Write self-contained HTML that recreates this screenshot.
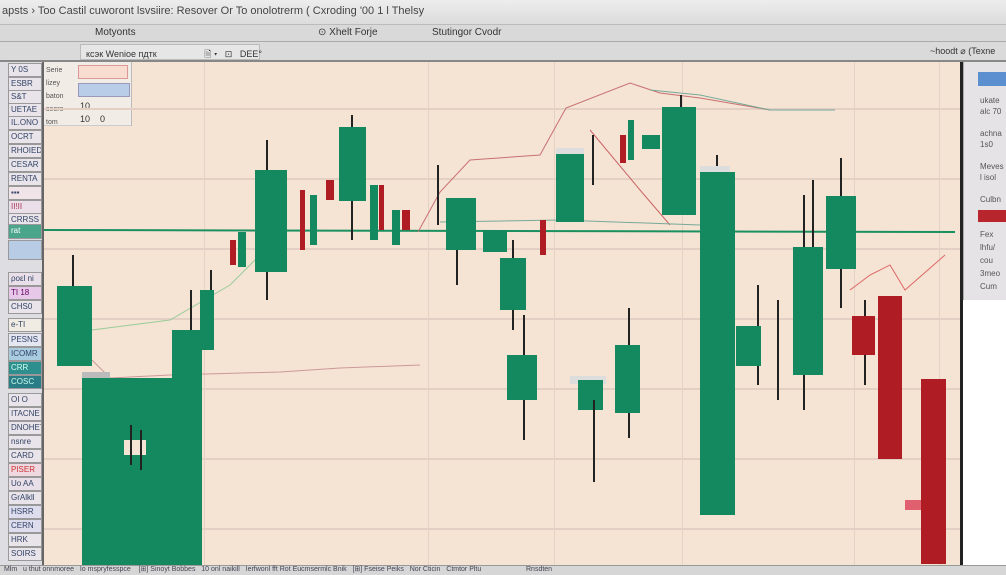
<!DOCTYPE html>
<html><head><meta charset="utf-8"><style>
body{margin:0;width:1006px;height:575px;overflow:hidden;background:#f5e3d4;font-family:"Liberation Sans",sans-serif;position:relative}
div{position:absolute;box-sizing:border-box}
.t{font-size:12px;color:#333;white-space:nowrap}
.g{background:#14895f}.r{background:#b01c24}.w{background:#222;width:2px}
.cell{left:8px;width:34px;height:14px;border:1px solid #999;background:#e8e4ea;font-size:8px;color:#346;overflow:hidden;line-height:12px;padding-left:2px;white-space:nowrap}
</style></head><body>
<div style="left:0;top:0;width:1006px;height:24px;background:linear-gradient(#ededed,#dcdcdc)"></div>
<div class="t" style="left:2px;top:5px;font-size:11px;color:#444">apsts › Too Castil cuworont lsvsiire: Resover Or To onolotrerm ( Cxroding '00 1 l Thelsy</div>
<div style="left:0;top:24px;width:1006px;height:18px;background:#d9d9d9;border-top:1px solid #bbb;border-bottom:1px solid #aaa"></div>
<div class="t" style="left:95px;top:27px;font-size:10px">Motyonts</div>
<div class="t" style="left:318px;top:27px;font-size:10px">⊙ Xhelt Forje</div>
<div class="t" style="left:432px;top:27px;font-size:10px">Stutingor Cvodr</div>
<div style="left:0;top:42px;width:1006px;height:20px;background:#dadada;border-bottom:2px solid #888"></div>
<div style="left:80px;top:44px;width:180px;height:16px;background:#e6e6e6;border:1px solid #bbb"></div>
<div class="t" style="left:86px;top:47px;font-size:9px">ксэк Wenioe пдтк &nbsp;&nbsp;&nbsp;&nbsp;&nbsp;&nbsp;&nbsp;&nbsp;&nbsp;&nbsp;&nbsp;&nbsp;&nbsp;&nbsp;&nbsp;&nbsp;&nbsp; 🗎 ▾ &nbsp; ⊡ &nbsp; DEE°</div>
<div class="t" style="left:930px;top:46px;font-size:9px">~hoodt ⌀ (Texne</div>
<!-- left panel -->
<div style="left:0;top:62px;width:44px;height:503px;background:#dedde2;border-right:2px solid #666"></div>
<div class="cell" style="top:63px">Y 0S</div><div class="cell" style="top:77px">ESBR</div><div class="cell" style="top:90px">S&T</div><div class="cell" style="top:103px">UETAE</div><div class="cell" style="top:116px">IL.ONO</div><div class="cell" style="top:130px">OCRT</div><div class="cell" style="top:144px">RHOIED</div><div class="cell" style="top:158px">CESAR</div><div class="cell" style="top:172px">RENTA</div>
<div class="cell" style="top:186px;background:#f0e4e8">▪▪▪</div><div class="cell" style="top:200px;background:#eadfe8;color:#a35">II!II</div><div class="cell" style="top:213px">CRRSS</div>
<div class="cell" style="top:224px;height:15px;background:#4aa58a;color:#fff">rat</div>
<div class="cell" style="top:240px;height:20px;background:#b8cce6"></div>
<div class="cell" style="top:272px;background:#e8dfe8">ρoεl ni</div><div class="cell" style="top:286px;background:#e8c8e8;color:#606">TI 18</div><div class="cell" style="top:300px">CHS0</div>
<div class="cell" style="top:318px;background:#f0ece4">e-TI</div><div class="cell" style="top:333px;background:#e4e6f2">PESNS</div><div class="cell" style="top:347px;background:#a8cbe0">ICOMR</div>
<div class="cell" style="top:361px;background:#2f8f8f;color:#cfe">CRR</div><div class="cell" style="top:375px;background:#2a7c86;color:#cfe">COSC</div>
<div class="cell" style="top:393px">OI O</div><div class="cell" style="top:407px">ITACNE</div><div class="cell" style="top:421px">DNOHET</div><div class="cell" style="top:435px">nsnre</div><div class="cell" style="top:449px">CARD</div><div class="cell" style="top:463px;background:#f0d8e0;color:#c33">PISER</div>
<div class="cell" style="top:477px;background:#e8dfe8">Uo AA</div><div class="cell" style="top:491px">GrAlkll</div><div class="cell" style="top:505px;background:#dde">HSRR</div><div class="cell" style="top:519px;background:#dde">CERN</div><div class="cell" style="top:533px">HRK</div><div class="cell" style="top:547px">SOIRS</div>
<!-- floating panel -->
<div style="left:44px;top:62px;width:88px;height:64px;background:#f2ece6;border-right:1px solid #bbb;border-bottom:1px solid #ccc"></div>
<div style="left:78px;top:65px;width:50px;height:14px;background:#f8dcd0;border:1px solid #d99"></div>
<div style="left:78px;top:83px;width:52px;height:14px;background:#b9cde8;border:1px solid #99b"></div>
<div class="t" style="left:46px;top:64px;font-size:7px;line-height:13px;color:#555">Serie<br>lizey<br>baton<br>seore<br>tom</div>
<div class="t" style="left:80px;top:100px;font-size:9px;line-height:13px">10<br>10 &nbsp;&nbsp; 0</div>
<!-- grid -->
<div style="left:44px;top:62px;width:918px;height:503px;background:
linear-gradient(90deg,transparent 0,transparent 160px,#e5d2c6 160px,#e5d2c6 161px,transparent 161px,transparent 384px,#e5d2c6 384px,#e5d2c6 385px,transparent 385px,transparent 510px,#e5d2c6 510px,#e5d2c6 511px,transparent 511px,transparent 638px,#e5d2c6 638px,#e5d2c6 639px,transparent 639px,transparent 810px,#e5d2c6 810px,#e5d2c6 811px,transparent 811px,transparent 895px,#e5d2c6 895px,#e5d2c6 896px,transparent 896px),
repeating-linear-gradient(transparent 0,transparent 46px,#e3cfc3 46px,#e3cfc3 48px,transparent 48px,transparent 70px)"></div>
<svg style="position:absolute;left:0;top:0" width="1006" height="575">
<polyline points="44,230 955,232" stroke="#1a9060" stroke-width="2" fill="none"/>
<polyline points="92,330 170,320 230,285 260,255" stroke="#9c9" stroke-width="1" fill="none"/>
<polyline points="92,360 110,378 170,375 280,372 340,368 420,365" stroke="#c99" stroke-width="1" fill="none"/>
<polyline points="418,232 440,192 470,160 540,155 566,108 630,83 660,93 700,98 770,110 830,110" stroke="#c87070" stroke-width="1" fill="none"/>
<polyline points="650,90 700,95 770,110 835,110" stroke="#7a9" stroke-width="1" fill="none"/>
<polyline points="590,130 640,190 670,225" stroke="#c66" stroke-width="1" fill="none"/>
<polyline points="850,290 870,275 890,265 905,290 945,255" stroke="#d66" stroke-width="1" fill="none"/>
<polyline points="440,222 560,220 700,225" stroke="#7a9" stroke-width="1" fill="none"/>
</svg>
<!-- candles -->
<div class="w" style="left:72px;top:255px;height:35px"></div>
<div class="g" style="left:57px;top:286px;width:35px;height:80px"></div>
<div style="left:82px;top:372px;width:28px;height:8px;background:#bbb"></div>
<div class="g" style="left:82px;top:378px;width:120px;height:187px"></div>
<div style="left:124px;top:440px;width:22px;height:15px;background:#f5e3d4"></div>
<div class="w" style="left:130px;top:425px;height:40px"></div><div class="w" style="left:140px;top:430px;height:40px"></div>
<div class="g" style="left:172px;top:330px;width:30px;height:70px"></div>
<div class="w" style="left:190px;top:290px;height:40px"></div><div class="w" style="left:210px;top:270px;height:80px"></div>
<div class="g" style="left:200px;top:290px;width:14px;height:60px"></div>
<div class="r" style="left:230px;top:240px;width:6px;height:25px"></div>
<div class="g" style="left:238px;top:232px;width:8px;height:35px"></div>
<div class="w" style="left:266px;top:140px;height:160px"></div>
<div class="g" style="left:255px;top:170px;width:32px;height:102px"></div>
<div class="r" style="left:300px;top:190px;width:5px;height:60px"></div>
<div class="g" style="left:310px;top:195px;width:7px;height:50px"></div>
<div class="r" style="left:326px;top:180px;width:8px;height:20px"></div>
<div class="w" style="left:351px;top:115px;height:125px"></div>
<div class="g" style="left:339px;top:127px;width:27px;height:74px"></div>
<div class="g" style="left:370px;top:185px;width:8px;height:55px"></div>
<div class="r" style="left:379px;top:185px;width:5px;height:45px"></div>
<div class="g" style="left:392px;top:210px;width:8px;height:35px"></div>
<div class="r" style="left:402px;top:210px;width:8px;height:20px"></div>
<div class="w" style="left:437px;top:165px;height:60px"></div>
<div class="w" style="left:456px;top:240px;height:45px"></div>
<div class="g" style="left:446px;top:198px;width:30px;height:52px"></div>
<div class="g" style="left:483px;top:230px;width:24px;height:22px"></div>
<div class="w" style="left:512px;top:240px;height:90px"></div>
<div class="g" style="left:500px;top:258px;width:26px;height:52px"></div>
<div class="r" style="left:540px;top:220px;width:6px;height:35px"></div>
<div class="w" style="left:523px;top:315px;height:125px"></div>
<div class="g" style="left:507px;top:355px;width:30px;height:45px"></div>
<div class="g" style="left:556px;top:152px;width:28px;height:70px"></div>
<div style="left:556px;top:148px;width:28px;height:6px;background:#ddd"></div>
<div class="w" style="left:592px;top:135px;height:50px"></div>
<div class="r" style="left:620px;top:135px;width:6px;height:28px"></div>
<div class="g" style="left:628px;top:120px;width:6px;height:40px"></div>
<div class="g" style="left:642px;top:135px;width:18px;height:14px"></div>
<div style="left:570px;top:376px;width:36px;height:8px;background:#ddd"></div>
<div class="g" style="left:578px;top:380px;width:25px;height:30px"></div>
<div class="w" style="left:593px;top:400px;height:82px"></div>
<div class="w" style="left:628px;top:308px;height:130px"></div>
<div class="g" style="left:615px;top:345px;width:25px;height:68px"></div>
<div class="w" style="left:680px;top:95px;height:20px"></div>
<div class="g" style="left:662px;top:107px;width:34px;height:108px"></div>
<div class="w" style="left:716px;top:155px;height:20px"></div>
<div style="left:700px;top:166px;width:30px;height:8px;background:#ddd"></div>
<div class="g" style="left:700px;top:172px;width:35px;height:343px"></div>
<div class="w" style="left:757px;top:285px;height:100px"></div>
<div class="g" style="left:736px;top:326px;width:25px;height:40px"></div>
<div class="w" style="left:777px;top:300px;height:100px"></div>
<div class="w" style="left:803px;top:195px;height:215px"></div>
<div class="w" style="left:812px;top:180px;height:130px"></div>
<div class="g" style="left:793px;top:247px;width:30px;height:128px"></div>
<div class="w" style="left:840px;top:158px;height:150px"></div>
<div class="g" style="left:826px;top:196px;width:30px;height:73px"></div>
<div class="w" style="left:864px;top:300px;height:85px"></div>
<div class="r" style="left:852px;top:316px;width:23px;height:39px"></div>
<div class="r" style="left:878px;top:296px;width:24px;height:163px"></div>
<div style="left:905px;top:500px;width:18px;height:10px;background:#e06070"></div>
<div class="r" style="left:921px;top:379px;width:25px;height:185px"></div>
<div style="left:960px;top:62px;width:3px;height:503px;background:#222"></div>
<!-- right panel -->
<div style="left:963px;top:62px;width:43px;height:238px;background:#e6e3e6;border-left:1px solid #aaa"></div>
<div style="left:963px;top:300px;width:43px;height:265px;background:#fff"></div>
<div style="left:978px;top:72px;width:28px;height:14px;background:#5b8fd0"></div>
<div class="t" style="left:980px;top:95px;font-size:8px;line-height:11px;color:#555">ukate<br>alc 70<br><br>achna<br>1s0<br><br>Meves<br>l isol<br><br>Culbn</div>
<div style="left:978px;top:210px;width:28px;height:12px;background:#b8252c"></div>
<div class="t" style="left:980px;top:228px;font-size:8px;line-height:13px;color:#555">Fex<br>lhfu/<br>cou<br>3meo<br>Cum</div>
<!-- bottom -->
<div style="left:0;top:565px;width:1006px;height:10px;background:#d6d6d6;border-top:1px solid #999"></div>
<div class="t" style="left:4px;top:565px;font-size:7px;color:#445">Mlm &nbsp; u thut onnmoree &nbsp; Io mspryfesspce &nbsp;&nbsp; [⊞] Sinoyt Bobbes &nbsp; 10 onl naikill &nbsp; Ierfwonl fft Rot Eucmsermlc Bnik &nbsp; [⊞] Fseise Peiks &nbsp; Nor Cticin &nbsp; Ctmtor Pltu &nbsp;&nbsp;&nbsp;&nbsp;&nbsp;&nbsp;&nbsp;&nbsp;&nbsp;&nbsp;&nbsp;&nbsp;&nbsp;&nbsp;&nbsp;&nbsp;&nbsp;&nbsp;&nbsp;&nbsp;&nbsp; Rnsdten</div>
</body></html>
